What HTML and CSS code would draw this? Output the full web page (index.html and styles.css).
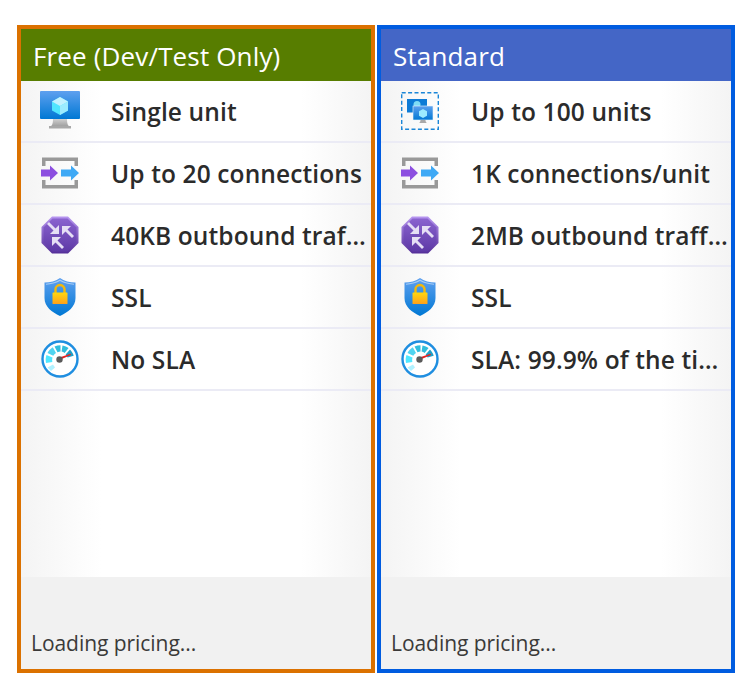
FILE: index.html
```html
<!DOCTYPE html>
<html lang="en">
<head>
<meta charset="utf-8">
<title>Pricing tiers</title>
<link rel="stylesheet" href="styles.css">
</head>
<body>
<svg class="defs" width="0" height="0" aria-hidden="true">
  <defs>
    <linearGradient id="screen" x1="0" y1="0" x2="0" y2="1"><stop offset="0" stop-color="#5ea0ef"/><stop offset="1" stop-color="#0078d4"/></linearGradient>
    <linearGradient id="stand" x1="0" y1="0" x2="0" y2="1"><stop offset="0" stop-color="#d0d0d0"/><stop offset="1" stop-color="#949494"/></linearGradient>
    <linearGradient id="octa" x1="0" y1="0" x2="0" y2="1"><stop offset="0" stop-color="#b796f0"/><stop offset="1" stop-color="#552f99"/></linearGradient>
    <linearGradient id="octa-in" x1="0" y1="0" x2="0" y2="1"><stop offset="0" stop-color="#8a63cf"/><stop offset="1" stop-color="#5e3aa6"/></linearGradient>
    <linearGradient id="lock" x1="0" y1="0" x2="0" y2="1"><stop offset="0" stop-color="#ffd70f"/><stop offset="1" stop-color="#fea11b"/></linearGradient>
    <symbol id="i-vm" viewBox="0 0 40 40">
      <rect x="0" y="0" width="40" height="28" rx="1" fill="url(#screen)"/>
      <path d="M13 28h14c0 5 1 7 4 9H9c3-2 4-4 4-9z" fill="url(#stand)"/>
      <rect x="9" y="35" width="22" height="2.500" fill="#a8a8a8"/>
      <path d="M20 6l8 4.500v9L20 24l-8-4.500v-9z" fill="#50e6ff"/>
      <path d="M20 6l8 4.500-8 4.500-8-4.500z" fill="#c3f1ff"/>
      <path d="M20 15l8-4.500v9L20 24z" fill="#9cebff"/>
    </symbol>
    <symbol id="i-conn" viewBox="0 0 38 34">
      <path d="M1 10V1.500h36V10h-3.500V5H4.500v5zM1 24v8.500h36V24h-3.500v5H4.500v-5z" fill="#999"/>
      <path d="M0 13.500h9V9.500l8 7.500-8 7.500v-4H0z" fill="#8c4fe0"/>
      <path d="M20 13.500h10V9.500l8 7.500-8 7.500v-4H20z" fill="#3fa9f5"/>
    </symbol>
    <symbol id="i-octa" viewBox="0 0 38 38">
      <path d="M11 .5h16L37.500 11v16L27 37.500H11L.5 27V11z" fill="url(#octa)"/>
      <path d="M11.500 2.500h15L35.500 11.500v15L26.500 35.500h-15L2.500 26.500v-15z" fill="url(#octa-in)"/>
      <g stroke="#e6dff5" stroke-width="2.800" fill="none">
        <path d="M7 7l8 8"/>
        <path d="M32 21l-8-8"/>
        <path d="M22 32l-8-8"/>
      </g>
      <g fill="#e6dff5">
        <path d="M18 18V9l-9 9z"/>
        <path d="M21 10h9l-9 9z"/>
        <path d="M11 21h9l-9 9z"/>
      </g>
    </symbol>
    <symbol id="i-ssl" viewBox="0 0 32 38">
      <path d="M16 0c4 3 10 4.500 15.500 4.500V20C31.500 29 24 34 16 38 8 34 .5 29 .5 20V4.500C6 4.500 12 3 16 0z" fill="url(#screen)"/>
      <path d="M16 1.500c4 2.500 9.500 4 14 4.200v1C25 6.500 20 5 16 3 12 5 7 6.500 2 6.700v-1C6.500 5.500 12 4 16 1.500z" fill="#a8cdf5"/>
      <path d="M11.500 15v-3.500a4.500 4.500 0 0 1 9 0V15" fill="none" stroke="#f2b80c" stroke-width="2.400"/>
      <rect x="8.500" y="14.500" width="15" height="11.500" rx=".6" fill="url(#lock)"/>
    </symbol>
    <symbol id="i-sla" viewBox="0 0 38 38">
      <circle cx="19" cy="19" r="17.500" fill="#fff" stroke="#1f8ee0" stroke-width="2.400"/>
      <path d="M5 23c-.6-3-.4-5.500.5-8l6 2.500c-.4 1.500-.5 3-.2 4.500z" fill="#50e6ff"/>
      <path d="M6.500 27.500L12 24.500l2 3-4 3.500z" fill="#b0f1ff"/>
      <path d="M6.500 13c1.200-2.500 3-4.300 5.300-5.700l3.200 5.600c-1.200.8-2 1.700-2.700 2.800z" fill="#50d4f0"/>
      <path d="M13.500 6.500c2-.9 4-1.300 6-1.300v6.400c-1 .1-2 .3-3 .7z" fill="#32bedd"/>
      <path d="M21.500 5.400c2.400.4 4.400 1.300 6.100 2.700l-4 5c-.8-.7-2-1.300-3-1.500z" fill="#32bedd"/>
      <path d="M29 9.500c1.800 1.800 3 3.800 3.700 6.300l-6.100 1.800c-.4-1.100-1-2.200-1.900-3.200z" fill="#1fa0c8"/>
      <path d="M18.500 17.500l11-3.800.5 1.300-10.500 4.500z" fill="#e62323"/>
      <circle cx="18.500" cy="19.500" r="3.200" fill="#5a5a5a"/>
    </symbol>
    <symbol id="i-scale" viewBox="0 0 38 38">
      <rect x=".7" y=".7" width="36.600" height="36.600" fill="none" stroke="#1a86d8" stroke-width="1.400" stroke-dasharray="4 2.400"/>
      <rect x="6" y="7" width="20" height="13.500" fill="#0e7bd6"/>
      <circle cx="16" cy="12.500" r="3.500" fill="#7fdcf6"/>
      <rect x="12" y="14" width="20" height="14" fill="url(#screen)" stroke="#eaf4fc" stroke-width=".6"/>
      <path d="M22 17l4 2.300v4.400L22 26l-4-2.300v-4.400z" fill="#9cebff"/>
      <path d="M19.500 28h5c0 1.500.4 2.300 1.500 3h-8c1.100-.7 1.500-1.500 1.500-3z" fill="#a8a8a8"/>
    </symbol>
  </defs>
</svg>
<main class="tiers">
  <section class="tier tier-free">
    <h2 class="tier-title">Free (Dev/Test Only)</h2>
    <ul class="features">
      <li class="feature"><span class="icon"><svg class="ic ic-vm"><use href="#i-vm"/></svg></span><span class="label">Single unit</span></li>
      <li class="feature"><span class="icon"><svg class="ic ic-conn"><use href="#i-conn"/></svg></span><span class="label">Up to 20 connections</span></li>
      <li class="feature"><span class="icon"><svg class="ic ic-38"><use href="#i-octa"/></svg></span><span class="label">40KB outbound traffic per day</span></li>
      <li class="feature"><span class="icon"><svg class="ic ic-ssl"><use href="#i-ssl"/></svg></span><span class="label">SSL</span></li>
      <li class="feature"><span class="icon"><svg class="ic ic-38"><use href="#i-sla"/></svg></span><span class="label">No SLA</span></li>
    </ul>
    <p class="price">Loading pricing...</p>
  </section>
  <section class="tier tier-standard">
    <h2 class="tier-title">Standard</h2>
    <ul class="features">
      <li class="feature"><span class="icon"><svg class="ic ic-38"><use href="#i-scale"/></svg></span><span class="label">Up to 100 units</span></li>
      <li class="feature"><span class="icon"><svg class="ic ic-conn"><use href="#i-conn"/></svg></span><span class="label">1K connections/unit</span></li>
      <li class="feature"><span class="icon"><svg class="ic ic-38"><use href="#i-octa"/></svg></span><span class="label">2MB outbound traffic per unit</span></li>
      <li class="feature"><span class="icon"><svg class="ic ic-ssl"><use href="#i-ssl"/></svg></span><span class="label">SSL</span></li>
      <li class="feature"><span class="icon"><svg class="ic ic-38"><use href="#i-sla"/></svg></span><span class="label">SLA: 99.9% of the time</span></li>
    </ul>
    <p class="price">Loading pricing...</p>
  </section>
</main>
</body>
</html>
```

FILE: styles.css
```css
* { box-sizing: border-box; }
html, body { margin: 0; background: #fff; }
body { padding: 25px 20px 27px 17px; font-family: "Open Sans", "Noto Sans", sans-serif; }
.defs { position: absolute; }
.tiers { display: flex; gap: 2px; }
.tier {
  width: 358px;
  height: 648px;
  border: 4px solid;
  display: flex;
  flex-direction: column;
  background: #fff;
}
.tier-free { border-color: #db7100; }
.tier-standard { border-color: #005ce0; }
.tier-title {
  margin: 0;
  height: 52px;
  padding: 1px 0 0 12px;
  display: flex;
  align-items: center;
  font-size: 26px;
  font-weight: 400;
  letter-spacing: 0.15px;
  color: #fff;
}
.tier-free .tier-title { background: #577d00; }
.tier-standard .tier-title { background: #4466c6; }
.features {
  list-style: none;
  margin: 0;
  padding: 0;
  height: 496px;
  background: linear-gradient(90deg, #f4f4f4 0, #fff 80px, #fff calc(100% - 70px), #f4f4f4 100%);
}
.feature {
  height: 62px;
  border-bottom: 2px solid #ebebf5;
  display: flex;
  align-items: center;
  padding-right: 3px;
}
.icon {
  flex: none;
  width: 90px;
  padding-left: 20px;
  height: 40px;
  display: flex;
  align-items: center;
}
.ic { display: block; }
.ic-vm { width: 40px; height: 40px; margin-left: -1px; }
.ic-conn { width: 38px; height: 34px; }
.ic-38 { width: 38px; height: 38px; }
.ic-ssl { width: 32px; height: 38px; margin-left: 3px; }
.label {
  min-width: 0;
  flex: 1;
  font-size: 24.5px;
  font-weight: 560;
  letter-spacing: 0.12px;
  color: #2b2b2b;
  white-space: nowrap;
  overflow: hidden;
  text-overflow: ellipsis;
}
.price {
  margin: 0;
  flex: 1;
  display: flex;
  align-items: flex-end;
  padding: 0 0 12px 10px;
  background: #f1f1f1;
  font-size: 21px;
  letter-spacing: -0.05px;
  color: #3b3a39;
}
```
